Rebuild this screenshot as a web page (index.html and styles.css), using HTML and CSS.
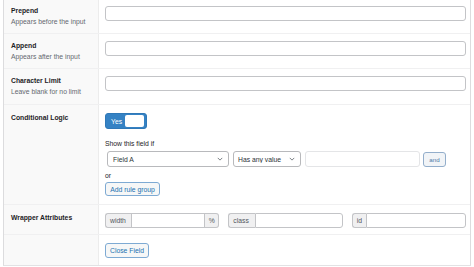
FILE: index.html
```html
<!DOCTYPE html>
<html>
<head>
<meta charset="utf-8">
<link rel="stylesheet" href="styles.css">
</head>
<body>
<div class="settings">
  <div class="row">
    <div class="label"><div class="title">Prepend</div><div class="desc">Appears before the input</div></div>
    <div class="content"><input class="text" type="text"></div>
  </div>
  <div class="row">
    <div class="label"><div class="title">Append</div><div class="desc">Appears after the input</div></div>
    <div class="content"><input class="text" type="text"></div>
  </div>
  <div class="row row-tall">
    <div class="label"><div class="title">Character Limit</div><div class="desc">Leave blank for no limit</div></div>
    <div class="content"><input class="text" type="text"></div>
  </div>
  <div class="row">
    <div class="label label-cond"><div class="title">Conditional Logic</div></div>
    <div class="content content-cond">
      <div class="toggle"><span class="toggle-on">Yes</span><span class="toggle-knob"></span></div>
      <div class="show-if">Show this field if</div>
      <div class="rule">
        <span class="select sel-field"><select><option>Field A</option></select><svg class="chev" viewBox="0 0 8 5"><path d="M1 1l3 3 3-3" fill="none" stroke="#50575e" stroke-width="1"/></svg></span>
        <span class="select sel-op"><select><option>Has any value</option></select><svg class="chev" viewBox="0 0 8 5"><path d="M1 1l3 3 3-3" fill="none" stroke="#50575e" stroke-width="1"/></svg></span>
        <input class="text value" type="text">
        <button class="btn btn-and">and</button>
      </div>
      <div class="or">or</div>
      <button class="btn btn-group">Add rule group</button>
    </div>
  </div>
  <div class="row">
    <div class="label label-wrap"><div class="title">Wrapper Attributes</div></div>
    <div class="content content-wrap">
      <div class="group"><span class="addon">width</span><input class="text" type="text"><span class="addon addon-r">%</span></div>
      <div class="group"><span class="addon">class</span><input class="text" type="text"></div>
      <div class="group"><span class="addon">id</span><input class="text" type="text"></div>
    </div>
  </div>
  <div class="row">
    <div class="label"></div>
    <div class="content content-close"><button class="btn btn-close">Close Field</button></div>
  </div>
</div>
</body>
</html>
```

FILE: styles.css
```css
* { box-sizing: border-box; }
html, body { margin: 0; padding: 0; background: #fff; }
body {
  font-family: "Liberation Sans", Arial, sans-serif;
  font-size: 6.8px;
  color: #1d2327;
}
.settings {
  width: 468px;
  margin: -1px 0 0 3px;
  border-left: 1px solid #dcdcde;
  border-right: 1px solid #dcdcde;
  border-bottom: 1px solid #e2e2e4;
}
.row {
  display: grid;
  grid-template-columns: 95px minmax(0, 1fr);
  border-top: 1px solid #f0f0f1;
}
.row:first-child { border-top: none; }
.label {
  background: #f9f9f9;
  border-right: 1px solid #ececec;
  padding: 7px 7px 0 7px;
}
.title {
  font-weight: bold;
  line-height: 10px;
  color: #1d2327;
}
.desc {
  line-height: 10px;
  margin-top: 1px;
  color: #646970;
}
.content {
  padding: 7px 4px 12px 6px;
  min-width: 0;
}
.row-tall .content { padding-bottom: 13px; }
.text {
  display: block;
  width: 100%;
  height: 15px;
  margin: 0;
  padding: 0 4px;
  border: 1px solid #c3c4c7;
  border-radius: 3px;
  background: #fff;
  font: inherit;
}
.label-cond { padding-top: 8px; }
.content-cond { padding: 8px 4px 8px 6px; }
.toggle {
  width: 42px;
  height: 16px;
  background: #3582c4;
  border: 1px solid #2f78b7;
  border-radius: 3px;
  display: flex;
  align-items: center;
  padding: 0 2px 0 0;
}
.toggle-on {
  flex: 1;
  color: #fff;
  padding-left: 5px;
}
.toggle-knob {
  width: 19px;
  height: 12px;
  background: #fff;
  border-radius: 2px;
}
.show-if {
  margin-top: 10px;
  line-height: 10px;
  color: #1d2327;
}
.rule {
  display: flex;
  align-items: center;
  margin-top: 2px;
  padding-left: 2px;
}
.select {
  position: relative;
  display: block;
  height: 16px;
}
.select select {
  appearance: none;
  -webkit-appearance: none;
  width: 100%;
  height: 16px;
  margin: 0;
  padding: 0 4px;
  border: 1px solid #b8b9bc;
  border-radius: 3px;
  background: #fff;
  font: inherit;
  color: #2c3338;
}
.chev {
  position: absolute;
  right: 6px;
  top: 6px;
  width: 6px;
  height: 4px;
}
.sel-field { width: 122px; margin-right: 4px; }
.sel-field select { padding-left: 5px; }
.sel-op { width: 68px; margin-right: 4px; }
.rule .value {
  width: 115px;
  height: 16px;
  border-color: #e4e5e7;
  margin-right: 3px;
}
.btn {
  margin: 0;
  padding: 0;
  font: inherit;
  color: #2271b1;
  background: #f6f7f7;
  border: 1px solid #7eaad3;
  border-radius: 3px;
  cursor: pointer;
}
.btn-and {
  width: 23px;
  height: 15px;
  color: #4f7aa6;
  border-color: #93aecb;
  background: #f1f4f7;
  font-size: 6.2px;
}
.or {
  margin-top: 4px;
  line-height: 10px;
  color: #1d2327;
}
.btn-group {
  display: block;
  margin-top: 1px;
  width: 55px;
  height: 14px;
}
.label-wrap { padding-top: 8px; }
.content-wrap {
  display: flex;
  gap: 9px;
  padding: 8px 4px 6px 6px;
}
.group {
  flex: 1 1 0;
  min-width: 0;
  display: flex;
  height: 15px;
}
.addon {
  flex: none;
  display: flex;
  align-items: center;
  padding: 0 4px;
  background: #f0f0f1;
  border: 1px solid #c3c4c7;
  border-right: none;
  border-radius: 3px 0 0 3px;
  color: #50575e;
}
.addon-r {
  border-right: 1px solid #c3c4c7;
  border-left: none;
  border-radius: 0 3px 3px 0;
}
.group .text {
  flex: 1 1 0;
  width: 0;
  min-width: 0;
  border-radius: 0 3px 3px 0;
}
.group .addon-r { width: 14px; justify-content: center; padding: 0; }
.group:first-child .text { border-radius: 0; }
.group:first-child .addon:first-child { width: 26px; }
.group:nth-child(2) .addon { width: 27px; }
.group:nth-child(3) .addon { width: 14px; }
.content-close { padding: 8px 4px 7px 6px; }
.btn-close {
  display: block;
  width: 44px;
  height: 15px;
}
```
